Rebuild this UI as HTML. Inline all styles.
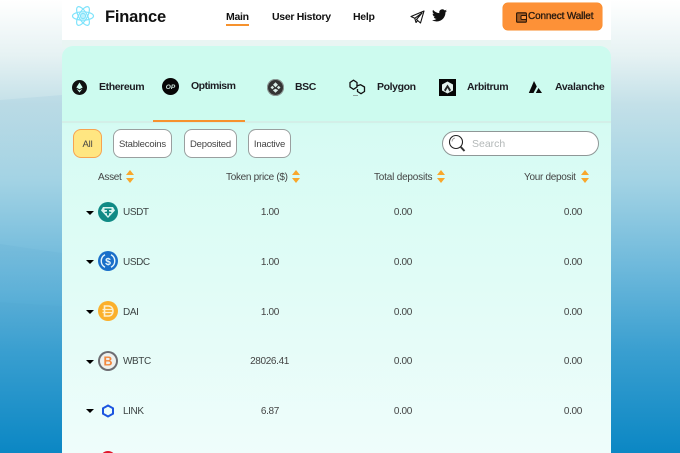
<!DOCTYPE html>
<html><head><meta charset="utf-8"><title>Finance</title>
<style>
html,body{margin:0;padding:0;width:680px;height:453px;overflow:hidden}
body{font-family:"Liberation Sans",sans-serif}
#w{position:relative;width:680px;height:453px;overflow:hidden;background:linear-gradient(180deg,#fff 0,#e6f2f3 55px,#c3e0e8 105px,#a3d3e4 180px,#6cb8db 270px,#3a9fd0 350px,#0b87c4 453px)}
.a{position:absolute;white-space:nowrap}
.hd{font-weight:700;font-size:10.5px;letter-spacing:-.3px;color:#111;line-height:14px}
.tab{font-weight:700;font-size:10.5px;letter-spacing:-.4px;color:#1c1c22;line-height:14px}
.btn{position:absolute;top:129px;height:29px;box-sizing:border-box;border:1px solid #9a9f9f;border-radius:8px;background:#fff;font-size:9.5px;letter-spacing:-.2px;color:#444;text-align:center;line-height:29px}
.th{font-size:10px;letter-spacing:-.3px;color:#444;line-height:12px}
.td{font-size:10px;letter-spacing:-.35px;color:#444;line-height:12px;text-align:right}
.name{font-size:10px;letter-spacing:-.4px;color:#3d4444;line-height:12px}
.caret{position:absolute;left:86px;width:0;height:0;border-left:4px solid transparent;border-right:4px solid transparent;border-top:4px solid #000}
</style></head><body><div id="w">
<svg class="a" style="left:0;top:0" width="62" height="453"><defs><linearGradient id="f" x1="0" y1="0" x2="0" y2="1"><stop offset="0" stop-color="#3e8fbf" stop-opacity=".08"/><stop offset="1" stop-color="#3e8fbf" stop-opacity="0"/></linearGradient></defs><path d="M0 100L62 95V180L0 180Z" fill="url(#f)"/><path d="M0 244L62 253V300L0 300Z" fill="url(#f)"/><path d="M0 302L62 306V350L0 350Z" fill="url(#f)"/></svg>

<div class="a" style="left:62px;top:0;width:549px;height:40px;background:#fff"></div>
<div class="a" style="left:62px;top:40px;width:549px;height:8px;background:#e9f5f3"></div>
<div class="a" style="left:62px;top:46px;width:549px;height:407px;border-radius:11px 11px 0 0;background:linear-gradient(180deg,#cdfbef 0,#cdfbef 75px,#d6fbf3 80px,#e0fcf6 230px,#effdfb 407px)"></div>
<div class="a" style="left:62px;top:121px;width:549px;height:2px;background:#d3efe8"></div>

<svg class="a" style="left:71px;top:5px" width="24" height="22" viewBox="0 0 24 22" fill="none" stroke="#7fe3fb" stroke-width="1.2"><ellipse cx="12" cy="11" rx="10.5" ry="4.2"/><ellipse cx="12" cy="11" rx="10.5" ry="4.2" transform="rotate(60 12 11)"/><ellipse cx="12" cy="11" rx="10.5" ry="4.2" transform="rotate(120 12 11)"/><circle cx="12" cy="11" r="2.6" fill="#bff1fd"/></svg>
<div class="a" style="left:105px;top:7px;font-weight:700;font-size:16.5px;letter-spacing:-.2px;line-height:20px;color:#111">Finance</div>
<div class="a hd" style="left:226px;top:10px">Main</div>
<div class="a" style="left:226px;top:24px;width:23px;height:2px;background:#f6922e"></div>
<div class="a hd" style="left:272px;top:10px">User History</div>
<div class="a hd" style="left:353px;top:10px">Help</div>
<svg class="a" style="left:410px;top:10px" width="15" height="14" viewBox="0 0 15 14" fill="none" stroke="#111" stroke-width="1.1" stroke-linejoin="round"><path d="M14 1L1 6.5L4.8 8.3L12 3L6.5 9.5L10.5 13Z"/><path d="M4.8 8.3L6 12.5L7.6 10.5"/></svg>
<svg class="a" style="left:432px;top:9px" width="15" height="13" viewBox="0 0 24 20"><path fill="#111" d="M24 2.4a9.8 9.8 0 0 1-2.8.8A5 5 0 0 0 23.3.5a9.9 9.9 0 0 1-3.1 1.2A4.9 4.9 0 0 0 11.8 6.200A14 14 0 0 1 1.700.9a4.900 4.900 0 0 0 1.500 6.600A4.900 4.900 0 0 1 1 6.900a4.900 4.900 0 0 0 3.900 4.900 4.900 4.900 0 0 1-2.200.1 4.900 4.900 0 0 0 4.600 3.400A9.900 9.900 0 0 1 0 17.300 14 14 0 0 0 7.500 19.500c9.100 0 14.300-7.700 14-14.600A10 10 0 0 0 24 2.400z"/></svg>

<div class="a" style="left:503px;top:3px;width:99px;height:27px;border-radius:5px;background:#fd9137;box-shadow:0 0 0 .5px #f98a25"></div>
<svg class="a" style="left:516px;top:12px" width="11" height="11" viewBox="0 0 11 11"><rect x=".6" y=".8" width="9.800" height="9.400" rx="1" fill="#a55a1f" stroke="#2a1607" stroke-width="1.100"/><rect x="5" y="3.500" width="5.500" height="4" rx="1" fill="#fd9137" stroke="#2a1607"/></svg>
<div class="a" style="left:528px;top:10px;font-size:10px;line-height:14px;color:#2b1c10;-webkit-text-stroke:.35px #2b1c10;letter-spacing:-.15px">Connect Wallet</div>

<svg class="a" style="left:72px;top:80px" width="15" height="15" viewBox="0 0 15 15"><circle cx="7.500" cy="7.500" r="7.500" fill="#111"/><path d="M7.500 2.500L4.300 7.500L7.500 9.300L10.700 7.500Z" fill="#cdfbef"/><path d="M4.500 8.700L7.500 12.500L10.500 8.700L7.500 10.400Z" fill="#cdfbef"/></svg>
<div class="a tab" style="left:99px;top:80px">Ethereum</div>
<svg class="a" style="left:162px;top:78px" width="17" height="17" viewBox="0 0 17 17"><circle cx="8.500" cy="8.500" r="8.500" fill="#060606"/><text x="8.500" y="10.800" font-family="Liberation Sans" font-size="6.500" font-weight="700" font-style="italic" text-anchor="middle" fill="#cfe8e0">OP</text></svg>
<div class="a tab" style="left:191px;top:79px;letter-spacing:-.5px">Optimism</div>
<div class="a" style="left:153px;top:120px;width:92px;height:2px;background:#f6922e"></div>
<svg class="a" style="left:267px;top:79px" width="17" height="17" viewBox="0 0 17 17"><circle cx="8.500" cy="8.500" r="8.500" fill="#333"/><circle cx="8.500" cy="8.500" r="8" fill="none" stroke="#8e9a97" stroke-width="1"/><path d="M8.500 3.200L11 5.700L8.500 8.200L6 5.700ZM3.500 8.500L5.300 6.700L7.100 8.500L5.300 10.300ZM13.500 8.500L11.700 6.700L9.900 8.500L11.700 10.300ZM8.500 13.800L5.800 11.100L8.500 9.800L11.200 11.100Z" fill="#d8ebe6"/></svg>
<div class="a tab" style="left:295px;top:80px">BSC</div>
<svg class="a" style="left:349px;top:79px" width="17" height="17" viewBox="0 0 17 17" fill="none" stroke="#111" stroke-width="1.300" stroke-linejoin="round"><path d="M1 3.500L4.500 1.200L8 3.500V8L4.500 10.300L1 8Z"/><path d="M7.500 7L11.500 5.700L15.500 8V12.500L12 14.700L8.500 12.500V10"/><path d="M4 16.300H9" stroke-width=".6" stroke="#666"/></svg>
<div class="a tab" style="left:377px;top:80px">Polygon</div>
<svg class="a" style="left:439px;top:79px" width="17" height="17" viewBox="0 0 17 17"><rect width="17" height="17" fill="#050505"/><path d="M8.500 2.500L14 5.500V11.500L8.500 14.500L3 11.500V5.500Z" fill="#e3efec"/><path d="M8.500 5.500L12 11L10.500 12.500L8.500 9L6.500 12.500L5 11Z" fill="#222"/></svg>
<div class="a tab" style="left:467px;top:80px">Arbitrum</div>
<svg class="a" style="left:528px;top:80px" width="15" height="14" viewBox="0 0 15 14"><path d="M6 1L.8 13H5.500L8.800 6.500Z" fill="#0a0a0a"/><path d="M10.500 8L7.800 13H14Z" fill="#0a0a0a"/></svg>
<div class="a tab" style="left:555px;top:80px;letter-spacing:-.3px">Avalanche</div>

<div class="btn" style="left:73px;width:29px;background:#ffe681;border-color:#f7a350;border-width:1.200px;color:#444">All</div>
<div class="btn" style="left:113px;width:59px">Stablecoins</div>
<div class="btn" style="left:184px;width:53px">Deposited</div>
<div class="btn" style="left:248px;width:43px">Inactive</div>

<div class="a" style="left:442px;top:131px;width:157px;height:25px;box-sizing:border-box;border:1px solid #8f9797;border-radius:13px;background:#fff"></div>
<svg class="a" style="left:448px;top:134px" width="18" height="19" viewBox="0 0 18 19" fill="none"><circle cx="8" cy="8" r="6.500" stroke="#222" stroke-width="1.100"/><path d="M12.800 13L16.500 17" stroke="#333" stroke-width="2"/><path d="M4 7.500A4 4 0 0 1 7 4" stroke="#888" stroke-width=".8"/></svg>
<div class="a" style="left:472px;top:138px;font-size:10.5px;line-height:13px;color:#b3b8b8">Search</div>

<div class="a th" style="left:98px;top:172px">Asset</div>
<div class="a th" style="left:226px;top:172px">Token price ($)</div>
<div class="a th" style="left:374px;top:172px;letter-spacing:-.2px">Total deposits</div>
<div class="a th" style="left:524px;top:172px">Your deposit</div>
<svg class="a" style="left:125px;top:169px" width="10" height="15"><path d="M5 1L9 6H1ZM1 9H9L5 14Z" fill="#f9a72b"/></svg>
<svg class="a" style="left:291px;top:169px" width="10" height="15"><path d="M5 1L9 6H1ZM1 9H9L5 14Z" fill="#f9a72b"/></svg>
<svg class="a" style="left:436px;top:169px" width="10" height="15"><path d="M5 1L9 6H1ZM1 9H9L5 14Z" fill="#f9a72b"/></svg>
<svg class="a" style="left:580px;top:169px" width="10" height="15"><path d="M5 1L9 6H1ZM1 9H9L5 14Z" fill="#f9a72b"/></svg>

<div class="caret" style="top:211px"></div>
<svg class="a" style="left:98px;top:202px" width="20" height="20" viewBox="0 0 20 20"><circle cx="10" cy="10" r="10" fill="#108a85"/><path d="M5 5H15L17 8.500L10 16L3 8.500Z" fill="#d7f3ee"/><path d="M6.500 6.500H13.500V8H11V9.500C12.500 9.600 13.500 10 13.500 10.400S12.500 11.200 11 11.300V13.500H9V11.300C7.500 11.200 6.500 10.800 6.500 10.400S7.500 9.600 9 9.500V8H6.500Z" fill="#108a85"/></svg>
<div class="a name" style="left:123px;top:207px">USDT</div>
<div class="a td" style="left:240px;width:39px;top:207px">1.00</div>
<div class="a td" style="left:372px;width:40px;top:207px">0.00</div>
<div class="a td" style="left:542px;width:40px;top:207px">0.00</div>

<div class="caret" style="top:260px"></div>
<svg class="a" style="left:98px;top:251px" width="20" height="20" viewBox="0 0 20 20"><circle cx="10" cy="10" r="10" fill="#1a6fc9"/><path d="M7 3.800A7 7 0 0 0 7 16.200M13 3.800A7 7 0 0 1 13 16.200" fill="none" stroke="#e8f6fb" stroke-width="1.400"/><text x="10" y="13.800" font-family="Liberation Sans" font-size="10.500" font-weight="700" text-anchor="middle" fill="#e8f6fb">$</text></svg>
<div class="a name" style="left:123px;top:257px">USDC</div>
<div class="a td" style="left:240px;width:39px;top:257px">1.00</div>
<div class="a td" style="left:372px;width:40px;top:257px">0.00</div>
<div class="a td" style="left:542px;width:40px;top:257px">0.00</div>

<div class="caret" style="top:310px"></div>
<svg class="a" style="left:98px;top:301px" width="20" height="20" viewBox="0 0 20 20"><circle cx="10" cy="10" r="10" fill="#fbb02c"/><path d="M6.500 5H10.500C13.500 5 15 7.500 15 10S13.500 15 10.500 15H6.500Z" fill="none" stroke="#fdf0cf" stroke-width="1.600"/><path d="M4.500 8.500H15.500M4.500 11.500H15.500" stroke="#fdf0cf" stroke-width="1.300"/></svg>
<div class="a name" style="left:123px;top:307px">DAI</div>
<div class="a td" style="left:240px;width:39px;top:307px">1.00</div>
<div class="a td" style="left:372px;width:40px;top:307px">0.00</div>
<div class="a td" style="left:542px;width:40px;top:307px">0.00</div>

<div class="caret" style="top:360px"></div>
<svg class="a" style="left:98px;top:351px" width="20" height="20" viewBox="0 0 20 20"><circle cx="10" cy="10" r="10" fill="#6d6d72"/><circle cx="10" cy="10" r="8" fill="#eef0ee"/><text x="10" y="14.500" font-family="Liberation Sans" font-size="12.500" font-weight="700" text-anchor="middle" fill="#f2873d">B</text></svg>
<div class="a name" style="left:123px;top:356px">WBTC</div>
<div class="a td" style="left:240px;width:49px;top:356px">28026.41</div>
<div class="a td" style="left:372px;width:40px;top:356px">0.00</div>
<div class="a td" style="left:542px;width:40px;top:356px">0.00</div>

<div class="caret" style="top:409px"></div>
<svg class="a" style="left:101px;top:404px" width="14" height="14" viewBox="0 0 14 14"><path d="M7 1.500L12 4.300V9.700L7 12.500L2 9.700V4.300Z" fill="none" stroke="#1c55e0" stroke-width="2"/></svg>
<div class="a name" style="left:123px;top:406px">LINK</div>
<div class="a td" style="left:240px;width:39px;top:406px">6.87</div>
<div class="a td" style="left:372px;width:40px;top:406px">0.00</div>
<div class="a td" style="left:542px;width:40px;top:406px">0.00</div>

<div class="a" style="left:100px;top:451px;width:16px;height:16px;border-radius:50%;background:#e0162b"></div>
</div></body></html>
